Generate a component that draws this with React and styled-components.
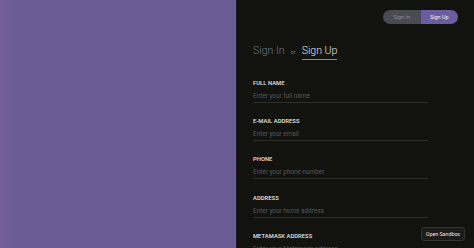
import React from 'react'
import styled, { createGlobalStyle } from 'styled-components'

const Global = createGlobalStyle`
  html, body { margin: 0; padding: 0; height: 100%; overflow: hidden; }
  body { font-family: Roboto, "Liberation Sans", sans-serif; background: #12120f; }
  #root { height: 100%; }
`

const Page = styled.div`
  display: flex;
  height: 248px;
  width: 474px;
  overflow: hidden;
  position: relative;
`

const Side = styled.div`
  width: 236px;
  flex: none;
  background: linear-gradient(90deg, #765f9c 0px, #6b5c96 14px, #6b5c96 100%);
  border-right: 1px solid #1a1828;
`

const Panel = styled.div`
  flex: 1;
  background: #12120f;
  padding: 10px 16px 0 16px;
  box-sizing: border-box;
`

const ToggleRow = styled.div`
  display: flex;
  justify-content: flex-end;
`

const Toggle = styled.div`
  display: flex;
  height: 14px;
  border-radius: 7px;
  overflow: hidden;
`

const ToggleItem = styled.div`
  width: 37.5px;
  display: flex;
  align-items: center;
  justify-content: center;
  font-size: 5.5px;
  color: ${p => (p.active ? '#f2f0f8' : '#8a8a92')};
  background: ${p => (p.active ? '#6c5ca2' : '#4a4a52')};
`

const Heading = styled.div`
  display: flex;
  align-items: baseline;
  margin-top: 20px;
  height: 16px;
`

const Tab = styled.span`
  font-size: 10.6px;
  font-weight: 300;
  color: ${p => (p.active ? '#e6e6e6' : '#6f7681')};
  padding-bottom: 2px;
  border-bottom: ${p => (p.active ? '1px solid #8a8a8a' : '1px solid transparent')};
`

const Or = styled.span`
  font-size: 5.5px;
  color: #6f7681;
  margin: 0 6px 0 6px;
`

const Form = styled.div`
  margin-top: 19.5px;
  width: 175px;
  display: flex;
  flex-direction: column;
`

const Field = styled.div`
  display: flex;
  flex-direction: column;
  margin-bottom: 15.4px;
`

const Label = styled.label`
  font-size: 5.8px;
  font-weight: 500;
  color: #e4e4e4;
  letter-spacing: 0.05px;
  line-height: 7px;
`

const Input = styled.input`
  margin-top: 2px;
  background: transparent;
  border: none;
  border-bottom: 1px solid #2f2f2a;
  padding: 3px 0 2px 0;
  font-family: Roboto, "Liberation Sans", sans-serif;
  font-size: 6.4px;
  color: #ddd;
  outline: none;
  &::placeholder { color: #55595b; }
`

const Sandbox = styled.button`
  position: absolute;
  right: 9px;
  bottom: 7px;
  height: 14px;
  padding: 0 4px;
  background: #1b1b1a;
  border: 1px solid #34342f;
  border-radius: 3px;
  color: #e8e8e8;
  font-family: Roboto, "Liberation Sans", sans-serif;
  font-size: 5.3px;
`

const fields = [
  ['FULL NAME', 'Enter your full name'],
  ['E-MAIL ADDRESS', 'Enter your email'],
  ['PHONE', 'Enter your phone number'],
  ['ADDRESS', 'Enter your home address'],
  ['METAMASK ADDRESS', 'Enter your Metamask address']
]

export default function App () {
  return (
    <Page>
      <Global />
      <Side />
      <Panel>
        <ToggleRow>
          <Toggle>
            <ToggleItem>Sign In</ToggleItem>
            <ToggleItem active>Sign Up</ToggleItem>
          </Toggle>
        </ToggleRow>
        <Heading>
          <Tab>Sign In</Tab>
          <Or>or</Or>
          <Tab active>Sign Up</Tab>
        </Heading>
        <Form>
          {fields.map(([label, ph]) => (
            <Field key={label}>
              <Label>{label}</Label>
              <Input placeholder={ph} />
            </Field>
          ))}
        </Form>
      </Panel>
      <Sandbox>Open Sandbox</Sandbox>
    </Page>
  )
}
